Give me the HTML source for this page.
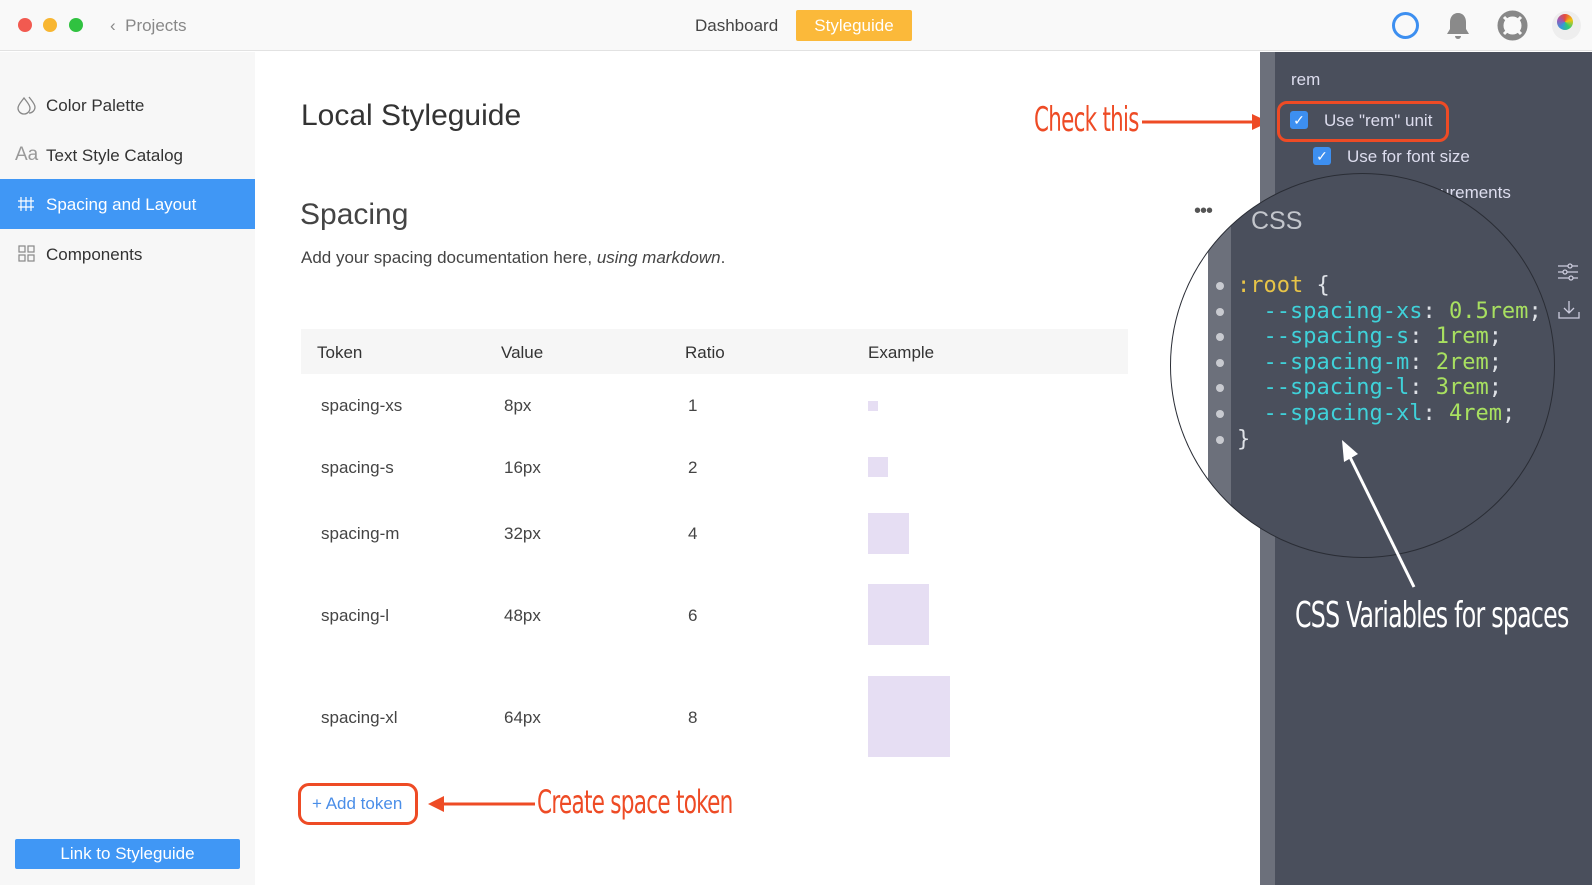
<!DOCTYPE html>
<html><head><meta charset="utf-8"><style>
*{margin:0;padding:0;box-sizing:border-box}
body{width:1592px;height:885px;overflow:hidden;background:#fff;font-family:"Liberation Sans",sans-serif;position:relative;color:#333}
.a{position:absolute;white-space:nowrap}
.hand{font-family:"Liberation Sans Narrow","DejaVu Sans Condensed","Liberation Sans",sans-serif;font-weight:normal;letter-spacing:-1px}
.mono{font-family:"DejaVu Sans Mono","Liberation Mono",monospace}
.t{font-size:17px;color:#444}
.dot{position:absolute;width:8px;height:8px;border-radius:50%;background:#c8cad0}
</style></head><body>
<!-- titlebar -->
<div class="a" style="left:0;top:0;width:1592px;height:51px;background:#f9f9f9;border-bottom:1px solid #e2e2e2"></div>
<div class="a" style="left:18px;top:18px;width:14px;height:14px;border-radius:50%;background:#f25a50"></div>
<div class="a" style="left:43px;top:18px;width:14px;height:14px;border-radius:50%;background:#f8b631"></div>
<div class="a" style="left:69px;top:18px;width:14px;height:14px;border-radius:50%;background:#30c240"></div>
<div class="a" style="left:110px;top:16px;font-size:17px;color:#888">&#8249;&nbsp; Projects</div>
<div class="a" style="left:695px;top:16px;font-size:17px;color:#444">Dashboard</div>
<div class="a" style="left:796px;top:10px;width:116px;height:31px;background:#fbb93a;border-radius:2px;color:#fff;font-size:17px;text-align:center;line-height:31px">Styleguide</div>
<div class="a" style="left:1392px;top:12px;width:27px;height:27px;border-radius:50%;border:3px solid #3d8ff0"></div>
<svg class="a" style="left:1444px;top:11px" width="28" height="30" viewBox="0 0 28 30"><path d="M14 2c-5 0-8 4-8 9v7l-3 5h22l-3-5v-7c0-5-3-9-8-9z" fill="#8a8a8a"/><path d="M11 25a3 3 0 0 0 6 0z" fill="#8a8a8a"/></svg>
<svg class="a" style="left:1497px;top:10px" width="31" height="31" viewBox="0 0 31 31"><circle cx="15.5" cy="15.5" r="12" fill="none" stroke="#888" stroke-width="6"/><g stroke="#f9f9f9" stroke-width="3"><path d="M7 7l4 4M24 7l-4 4M7 24l4-4M24 24l-4-4"/></g></svg>
<div class="a" style="left:1552px;top:11px;width:29px;height:29px;border-radius:50%;background:#eee"></div>
<div class="a" style="left:1557px;top:14px;width:16px;height:16px;border-radius:50%;background:conic-gradient(#e74c3c,#f1c40f,#2ecc71,#3498db,#9b59b6,#e74c3c)"></div>
<!-- sidebar -->
<div class="a" style="left:0;top:52px;width:255px;height:833px;background:#f7f7f7"></div>
<svg class="a" style="left:16px;top:95px" width="22" height="20" viewBox="0 0 22 20"><path d="M8 3c-3 4-6 7-6 10a6 6 0 0 0 12 0c0-3-3-6-6-10z M13 2c3 4 6 7 6 10a6 6 0 0 1-6 6" fill="none" stroke="#888" stroke-width="1.3"/></svg>
<div class="a" style="left:46px;top:96px;font-size:17px;color:#333">Color Palette</div>
<div class="a" style="left:15px;top:144px;font-size:19px;color:#999">Aa</div>
<div class="a" style="left:46px;top:146px;font-size:17px;color:#333">Text Style Catalog</div>
<div class="a" style="left:0;top:179px;width:255px;height:50px;background:#4097f5"></div>
<svg class="a" style="left:17px;top:196px" width="18" height="16" viewBox="0 0 18 16"><path d="M4 1v14M9 1v14M14 1v14M1 5h16M1 11h16" stroke="#fff" stroke-width="1.2" fill="none"/></svg>
<div class="a" style="left:46px;top:195px;font-size:17px;color:#fff">Spacing and Layout</div>
<svg class="a" style="left:18px;top:245px" width="17" height="17" viewBox="0 0 17 17"><g fill="none" stroke="#888" stroke-width="1.2"><rect x="1" y="1" width="6" height="6"/><rect x="10" y="1" width="6" height="6"/><rect x="1" y="10" width="6" height="6"/><rect x="10" y="10" width="6" height="6"/></g></svg>
<div class="a" style="left:46px;top:245px;font-size:17px;color:#333">Components</div>
<div class="a" style="left:15px;top:839px;width:225px;height:30px;background:#4097f5;border-radius:2px;color:#fff;font-size:17px;text-align:center;line-height:30px">Link to Styleguide</div>
<!-- main -->
<div class="a" style="left:301px;top:99px;font-size:30px;color:#333">Local Styleguide</div>
<div class="a" style="left:300px;top:198px;font-size:30px;color:#444;font-weight:300">Spacing</div>
<div class="a t" style="left:301px;top:248px">Add your spacing documentation here, <i>using markdown</i>.</div>
<div class="a" style="left:1194px;top:200px;font-size:20px;color:#555;letter-spacing:-1px">•••</div>
<div class="a" style="left:301px;top:329px;width:827px;height:45px;background:#f6f6f6"></div>
<div class="a" style="left:317px;top:343px;font-size:17px;color:#333">Token</div>
<div class="a" style="left:501px;top:343px;font-size:17px;color:#333">Value</div>
<div class="a" style="left:685px;top:343px;font-size:17px;color:#333">Ratio</div>
<div class="a" style="left:868px;top:343px;font-size:17px;color:#333">Example</div>

<div class="a t" style="left:321px;top:396px">spacing-xs</div><div class="a t" style="left:504px;top:396px">8px</div><div class="a t" style="left:688px;top:396px">1</div>
<div class="a" style="left:868px;top:401px;width:10px;height:10px;background:#e6def3"></div>
<div class="a t" style="left:321px;top:458px">spacing-s</div><div class="a t" style="left:504px;top:458px">16px</div><div class="a t" style="left:688px;top:458px">2</div>
<div class="a" style="left:868px;top:457px;width:20px;height:20px;background:#e6def3"></div>
<div class="a t" style="left:321px;top:524px">spacing-m</div><div class="a t" style="left:504px;top:524px">32px</div><div class="a t" style="left:688px;top:524px">4</div>
<div class="a" style="left:868px;top:513px;width:41px;height:41px;background:#e6def3"></div>
<div class="a t" style="left:321px;top:606px">spacing-l</div><div class="a t" style="left:504px;top:606px">48px</div><div class="a t" style="left:688px;top:606px">6</div>
<div class="a" style="left:868px;top:584px;width:61px;height:61px;background:#e6def3"></div>
<div class="a t" style="left:321px;top:708px">spacing-xl</div><div class="a t" style="left:504px;top:708px">64px</div><div class="a t" style="left:688px;top:708px">8</div>
<div class="a" style="left:868px;top:676px;width:82px;height:81px;background:#e6def3"></div>

<div class="a" style="left:298px;top:783px;width:120px;height:42px;border:3px solid #ee4b25;border-radius:11px"></div>
<div class="a" style="left:312px;top:794px;font-size:17px;color:#4a8ee8">+ Add token</div>
<svg class="a" style="left:425px;top:792px" width="112" height="24"><path d="M110 12H16" stroke="#ee4b25" stroke-width="3"/><path d="M3 12l16-8v16z" fill="#ee4b25"/></svg>
<div class="a hand" style="left:537px;top:783px;font-size:32px;color:#ee4b25;transform:scaleX(.75);transform-origin:left">Create space token</div>
<div class="a hand" style="left:1034px;top:100px;font-size:34px;color:#ee4b25;transform:scaleX(.7);transform-origin:left">Check this</div>
<svg class="a" style="left:1142px;top:110px" width="130" height="24"><path d="M0 12H112" stroke="#ee4b25" stroke-width="3"/><path d="M127 12l-17-8v16z" fill="#ee4b25"/></svg>
<!-- right panel -->
<div class="a" style="left:1260px;top:52px;width:332px;height:833px;background:#4a4f5c"></div>
<div class="a" style="left:1260px;top:52px;width:15px;height:833px;background:#6c707b"></div>
<div class="a" style="left:1291px;top:70px;font-size:17px;color:#dde">rem</div>
<div class="a" style="left:1277px;top:101px;width:172px;height:41px;border:3px solid #ee4b25;border-radius:10px"></div>
<div class="a" style="left:1290px;top:111px;width:18px;height:18px;background:#3d8ff0;border-radius:3px;color:#fff;font-size:14px;text-align:center;line-height:18px">✓</div>
<div class="a" style="left:1324px;top:111px;font-size:17px;color:#dde">Use "rem" unit</div>
<div class="a" style="left:1313px;top:147px;width:18px;height:18px;background:#3d8ff0;border-radius:3px;color:#fff;font-size:14px;text-align:center;line-height:18px">✓</div>
<div class="a" style="left:1347px;top:147px;font-size:17px;color:#dde">Use for font size</div>
<div class="a" style="left:1440px;top:183px;font-size:17px;color:#dde">urements</div>
<svg class="a" style="left:1557px;top:262px" width="22" height="20" viewBox="0 0 22 20"><g stroke="#ccd" stroke-width="1.3" fill="none"><path d="M1 4h20M1 10h20M1 16h20"/><circle cx="13" cy="4" r="2" fill="#4a4f5c"/><circle cx="8" cy="10" r="2" fill="#4a4f5c"/><circle cx="14" cy="16" r="2" fill="#4a4f5c"/></g></svg>
<svg class="a" style="left:1558px;top:300px" width="22" height="20" viewBox="0 0 22 20"><g stroke="#ccd" stroke-width="1.3" fill="none"><path d="M11 1v12M6 8l5 5 5-5M1 12v6h20v-6"/></g></svg>
<!-- magnifier -->
<div class="a" style="left:1170px;top:173px;width:385px;height:385px;border-radius:50%;overflow:hidden;border:1.5px solid #2a2d35;background:#4a4f5c">
  <div class="a" style="left:-1px;top:0;width:38px;height:400px;background:#fff"></div>
  <div class="a" style="left:37px;top:0;width:23px;height:400px;background:#6c707b"></div>
  <div class="a" style="left:80px;top:33px;font-size:25px;color:#c3c6cc">CSS</div>
  <div class="dot" style="left:45px;top:108px"></div>
  <div class="dot" style="left:45px;top:134px"></div>
  <div class="dot" style="left:45px;top:159px"></div>
  <div class="dot" style="left:45px;top:185px"></div>
  <div class="dot" style="left:45px;top:210px"></div>
  <div class="dot" style="left:45px;top:236px"></div>
  <div class="dot" style="left:45px;top:262px"></div>
  <div class="a mono" style="left:66px;top:99px;font-size:22px;line-height:25.6px;color:#dfe2e7"><span style="color:#e8c447">:root</span> {<br>&nbsp;&nbsp;<span style="color:#3fd1d9">--spacing-xs</span>: <span style="color:#a8e060">0.5rem</span>;<br>&nbsp;&nbsp;<span style="color:#3fd1d9">--spacing-s</span>: <span style="color:#a8e060">1rem</span>;<br>&nbsp;&nbsp;<span style="color:#3fd1d9">--spacing-m</span>: <span style="color:#a8e060">2rem</span>;<br>&nbsp;&nbsp;<span style="color:#3fd1d9">--spacing-l</span>: <span style="color:#a8e060">3rem</span>;<br>&nbsp;&nbsp;<span style="color:#3fd1d9">--spacing-xl</span>: <span style="color:#a8e060">4rem</span>;<br>}</div>
</div>
<svg class="a" style="left:1330px;top:435px" width="90" height="155"><path d="M84 152L16 14" stroke="#fff" stroke-width="3"/><path d="M12 5l2 22 14-8z" fill="#fff"/></svg>
<div class="a hand" style="left:1295px;top:595px;font-size:36px;color:#fff;transform:scaleX(.73);transform-origin:left">CSS Variables for spaces</div>
</body></html>
